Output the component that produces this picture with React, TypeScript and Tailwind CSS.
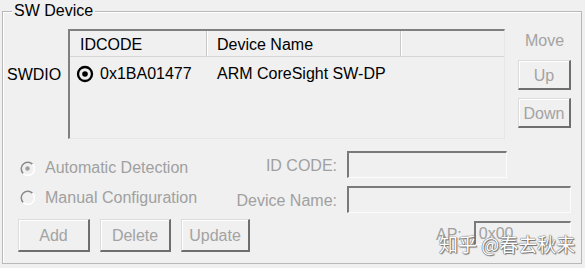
import React from "react";

function Radio({ checked }: { checked?: boolean }) {
  return (
    <svg width="15" height="15" viewBox="0 0 15 15" className="shrink-0">
      <path d="M12.5 3.2 A6.5 6.5 0 1 0 3.2 12.5" fill="none" stroke="#8a8a8a" strokeWidth="1.6" />
      <path d="M3.2 12.5 A6.5 6.5 0 0 0 12.5 3.2" fill="none" stroke="#ffffff" strokeWidth="1.6" />
      <circle cx="7.5" cy="7.5" r="5" fill="#f0f0f0" />
      {checked && <circle cx="7.5" cy="7.5" r="2.2" fill="#a0a0a0" />}
    </svg>
  );
}

function Btn({ label, w, h }: { label: string; w: string; h: string }) {
  return (
    <div
      className={`${w} ${h} flex items-center justify-center pt-[2px] border-t border-l border-t-[#dcdcdc] border-l-[#dcdcdc] border-r-2 border-b-2 border-r-[#6e6e6e] border-b-[#6e6e6e] text-[#a3a3a3] shadow-[inset_1px_1px_0_#ffffff]`}
    >
      {label}
    </div>
  );
}

function Input({ w, h }: { w: string; h: string }) {
  return (
    <div
      className={`${w} ${h} border-t-2 border-l-2 border-t-[#7a7a7a] border-l-[#7a7a7a] border-r border-b border-r-[#fcfcfc] border-b-[#fcfcfc] bg-[#f0f0f0]`}
    />
  );
}

export default function App() {
  return (
    <div
      className="w-[585px] h-[268px] bg-[#f0f0f0] pt-[11px] pl-[2px] pr-[3px] pb-[4px] text-[16px] leading-none text-black overflow-hidden whitespace-nowrap"
      style={{ fontFamily: '"Liberation Sans", Arial, sans-serif' }}
    >
      <div className="relative h-full border border-[#b8b8b8] shadow-[inset_1px_1px_0_#ffffff]">
        <div className="absolute -top-[10px] left-[9px] px-[2px] bg-[#f0f0f0] leading-[18px]">
          SW Device
        </div>

        {/* top section */}
        <div className="flex items-start pt-[17px]">
          <div className="w-[65px] shrink-0 pl-[4px] pt-[38px]">SWDIO</div>
          <div className="w-[437px] shrink-0 h-[110px] border-t-2 border-l-2 border-t-[#808080] border-l-[#808080] border-r border-b border-r-[#e6e6e6] border-b-[#e6e6e6] flex flex-col">
            <div className="flex h-[26px] border-b border-[#d6d6d6]">
              <div className="w-[137px] pl-[10px] pt-[3px] flex items-center border-r border-[#c9c9c9] shadow-[1px_0_0_#ffffff]">
                IDCODE
              </div>
              <div className="w-[194px] pl-[10px] pt-[3px] flex items-center border-r border-[#c9c9c9] shadow-[1px_0_0_#ffffff]">
                Device Name
              </div>
              <div className="flex-1" />
            </div>
            <div className="flex items-center h-[22px] mt-[6px]">
              <div className="w-[137px] flex items-center pl-[6px]">
                <svg width="18" height="18" viewBox="0 0 18 18" className="shrink-0">
                  <circle cx="9" cy="9" r="7" fill="none" stroke="#000" strokeWidth="2.3" />
                  <circle cx="9" cy="9" r="2.8" fill="#000" />
                </svg>
                <span className="ml-[6px]">0x1BA01477</span>
              </div>
              <div className="pl-[10px]">ARM CoreSight SW-DP</div>
            </div>
          </div>
          <div className="ml-[13px] w-[53px] shrink-0 flex flex-col items-center">
            <div className="text-[#a3a3a3] mt-[2px] h-[20px] flex items-center">Move</div>
            <div className="mt-[9px]">
              <Btn label="Up" w="w-[53px]" h="h-[30px]" />
            </div>
            <div className="mt-[8px]">
              <Btn label="Down" w="w-[53px]" h="h-[30px]" />
            </div>
          </div>
        </div>

        {/* detection rows */}
        <div className="flex items-center mt-[12px] h-[27px]">
          <div className="w-[180px] shrink-0 pl-[17px] flex items-center text-[#a0a0a0] mt-[7px]">
            <Radio checked />
            <span className="ml-[10px]">Automatic Detection</span>
          </div>
          <div className="w-[154px] shrink-0 text-right text-[#a0a0a0] mt-[2px]">ID CODE:</div>
          <div className="ml-[10px]">
            <Input w="w-[160px]" h="h-[27px]" />
          </div>
        </div>
        <div className="flex items-center mt-[8px] h-[27px]">
          <div className="w-[180px] shrink-0 pl-[17px] flex items-center text-[#a0a0a0] -mt-[4px]">
            <Radio />
            <span className="ml-[10px]">Manual Configuration</span>
          </div>
          <div className="w-[154px] shrink-0 text-right text-[#a0a0a0] mt-[2px]">Device Name:</div>
          <div className="ml-[10px]">
            <Input w="w-[224px]" h="h-[27px]" />
          </div>
        </div>

        {/* buttons row */}
        <div className="flex items-start mt-[6px] pl-[15px]">
          <Btn label="Add" w="w-[72px]" h="h-[33px]" />
          <div className="ml-[10px]">
            <Btn label="Delete" w="w-[71px]" h="h-[33px]" />
          </div>
          <div className="ml-[10px]">
            <Btn label="Update" w="w-[69px]" h="h-[33px]" />
          </div>
          <div className="ml-[186px] mt-[2px] flex items-center h-[24px]">
            <span className="text-[#a0a0a0] mt-[4px]">AP:</span>
            <div className="ml-[12px] w-[97px] h-[24px] border-t-2 border-l-2 border-t-[#7a7a7a] border-l-[#7a7a7a] border-r border-b border-r-[#fcfcfc] border-b-[#fcfcfc] pl-[3px] text-[#a0a0a0] flex items-center">
              0x00
            </div>
          </div>
        </div>

        <div
          className="absolute left-[436px] top-[222px] text-[19px] leading-none text-white [text-shadow:0_0_1px_#555,0_0_1px_#555,1px_1px_1px_#777]"
          style={{ fontFamily: '"Noto Sans CJK SC", "Liberation Sans", sans-serif' }}
        >
          知乎 @春去秋来
        </div>
      </div>
    </div>
  );
}
